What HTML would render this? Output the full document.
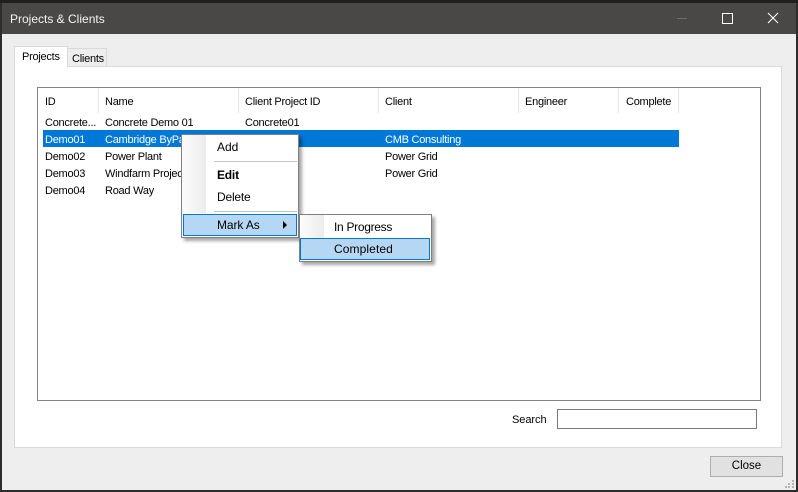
<!DOCTYPE html>
<html><head><meta charset="utf-8"><style>
html,body{margin:0;padding:0;background:#2b2b2b}
#r{position:relative;width:798px;height:492px;overflow:hidden;background:#2d2d2d;font-family:"Liberation Sans",sans-serif;font-size:11px;letter-spacing:-.25px;color:#000}
#r div{position:absolute;box-sizing:border-box}
.t{white-space:nowrap;line-height:16px;height:16px}
.w{color:#fff}
.sep{width:1px;top:88px;height:25px;background:#e5e5e5}
.ms{height:1px;background:#c4c4c4}
.hl{background:#b5d7f3;border:1px solid #0078d7}
.m{font-size:12px;letter-spacing:0}
</style></head><body><div id="r">
<div style="left:0;top:0;width:798px;height:3px;background:#1f1f1f"></div>
<div style="left:2px;top:3px;width:794px;height:31px;background:#4a4846"></div>
<div style="left:2px;top:34px;width:794px;height:456px;background:#eeeeee"></div>
<div class="t w" style="left:10px;top:11px;font-size:12px;letter-spacing:0;color:#f4f4f4">Projects &amp; Clients</div>
<svg style="position:absolute;left:660px;top:0" width="138" height="34"><path d="M17 18.500H27" stroke="#6e6c6a"/><path d="M62.500 13.500H72.500V23.500H62.500Z" stroke="#fff" fill="none" stroke-width="1"/><path d="M108 13L118 23M118 13L108 23" stroke="#fff" stroke-width="1.100"/></svg>

<div style="left:14px;top:66px;width:768px;height:382px;background:#fff;border:1px solid #d9d9d9"></div>
<div style="left:67px;top:48px;width:40px;height:19px;background:#eeeeee;border:1px solid #d9d9d9"></div>
<div style="left:14px;top:46px;width:54px;height:21px;background:#fff;border:1px solid #d9d9d9;border-bottom:0"></div>
<div class="t" style="left:22px;top:49px">Projects</div>
<div class="t" style="left:72px;top:51px">Clients</div>

<div style="left:37px;top:87px;width:724px;height:314px;background:#fff;border:1px solid #7f8288"></div>
<div class="sep" style="left:98px"></div><div class="sep" style="left:238px"></div><div class="sep" style="left:378px"></div><div class="sep" style="left:518px"></div><div class="sep" style="left:618px"></div><div class="sep" style="left:678px"></div>
<div class="t" style="left:45px;top:94px">ID</div>
<div class="t" style="left:105px;top:94px">Name</div>
<div class="t" style="left:245px;top:94px">Client Project ID</div>
<div class="t" style="left:385px;top:94px">Client</div>
<div class="t" style="left:525px;top:94px">Engineer</div>
<div class="t" style="left:626px;top:94px">Complete</div>

<div style="left:43px;top:130px;width:636px;height:17px;background:#0078d7"></div>
<div class="t" style="left:45px;top:115px">Concrete...</div><div class="t" style="left:105px;top:115px">Concrete Demo 01</div><div class="t" style="left:245px;top:115px">Concrete01</div>
<div class="t w" style="left:45px;top:132px">Demo01</div><div class="t w" style="left:105px;top:132px">Cambridge ByPass</div><div class="t w" style="left:385px;top:132px">CMB Consulting</div>
<div class="t" style="left:45px;top:149px">Demo02</div><div class="t" style="left:105px;top:149px">Power Plant</div><div class="t" style="left:385px;top:149px">Power Grid</div>
<div class="t" style="left:45px;top:166px">Demo03</div><div class="t" style="left:105px;top:166px">Windfarm Project</div><div class="t" style="left:385px;top:166px">Power Grid</div>
<div class="t" style="left:45px;top:183px">Demo04</div><div class="t" style="left:105px;top:183px">Road Way</div>

<div style="left:181px;top:134px;width:118px;height:104px;background:#fff;border:1px solid #7f7f7f;box-shadow:3px 3px 3px rgba(0,0,0,.35);overflow:hidden">
<div style="left:0;top:0;width:24px;height:78px;background:linear-gradient(90deg,#fcfcfc,#ececec)"></div>
</div>
<div class="ms" style="left:214px;top:161px;width:83px"></div>
<div class="ms" style="left:214px;top:211px;width:83px"></div>
<div class="t m" style="left:217px;top:139px">Add</div>
<div class="t m" style="left:217px;top:167px;font-weight:bold;letter-spacing:-.2px">Edit</div>
<div class="t m" style="left:217px;top:189px;letter-spacing:-.2px">Delete</div>
<div class="hl" style="left:183px;top:214px;width:114px;height:22px"></div>
<div class="t m" style="left:217px;top:217px;letter-spacing:-.1px">Mark As</div>
<svg style="position:absolute;left:282px;top:221px" width="6" height="8"><path d="M1 0L5 4L1 8Z" fill="#000"/></svg>

<div style="left:299px;top:214px;width:133px;height:48px;background:#fff;border:1px solid #7f7f7f;box-shadow:3px 3px 3px rgba(0,0,0,.35);overflow:hidden">
<div style="left:0;top:0;width:24px;height:23px;background:linear-gradient(90deg,#fcfcfc,#ececec)"></div>
</div>
<div class="t m" style="left:334px;top:219px;letter-spacing:-.3px">In Progress</div>
<div class="hl" style="left:300px;top:238px;width:130px;height:22px"></div>
<div class="t m" style="left:334px;top:241px;letter-spacing:.1px">Completed</div>

<div class="t" style="left:512px;top:412px;letter-spacing:-.05px">Search</div>
<div style="left:557px;top:409px;width:200px;height:20px;background:#fff;border:1px solid #7a7a7a"></div>
<div style="left:710px;top:456px;width:73px;height:21px;background:#e1e1e1;border:1px solid #adadad;text-align:center;line-height:19px;font-size:11.500px;letter-spacing:0">Close</div>
<svg style="position:absolute;left:784px;top:478px" width="12" height="12" fill="#b4b4b4"><rect x="8" y="2" width="2" height="2"/><rect x="4" y="5" width="2" height="2"/><rect x="8" y="5" width="2" height="2"/><rect x="1" y="8" width="2" height="2"/><rect x="4" y="8" width="2" height="2"/><rect x="8" y="8" width="2" height="2"/></svg>
</div></body></html>
